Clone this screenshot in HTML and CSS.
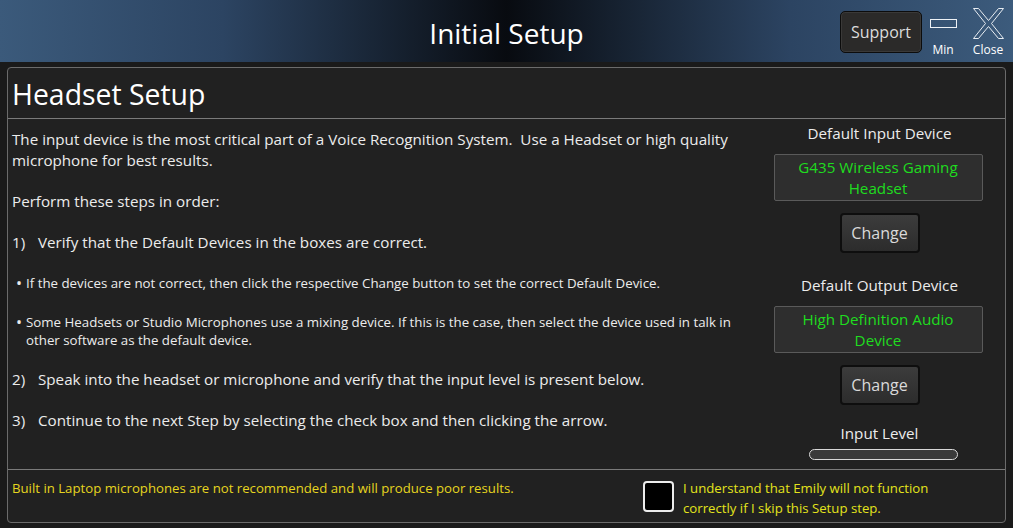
FILE: index.html
```html
<!DOCTYPE html>
<html>
<head>
    <title>Initial Setup</title>
    <link rel="stylesheet" href="styles.css">
</head>
<body>

<div class="titlebar">
    <div></div>
    <h1 class="title">Initial Setup</h1>
    <div class="controls">
        <button class="support">Support</button>
        <div class="winbtn">
            <div class="winicon"><span class="minbox"></span></div>
            <span class="winlabel">Min</span>
        </div>
        <div class="winbtn close">
            <div class="winicon">
                <svg width="31" height="31" viewBox="0 0 31 31">
                    <polygon points="0.5,0.5 5.5,0.5 15.5,12.5 25.5,0.5 30.5,0.5 18.5,15.5 30.5,30.5 25.5,30.5 15.5,18.5 5.5,30.5 0.5,30.5 12.5,15.5"
                             fill="none" stroke="#e8edf2" stroke-width="1"/>
                </svg>
            </div>
            <span class="winlabel">Close</span>
        </div>
    </div>
</div>

<div class="panel">
    <h2 class="heading">Headset Setup</h2>

    <div class="content">
        <div class="steps">
            <p>The input device is the most critical part of a Voice Recognition System.&nbsp; Use a Headset or high quality microphone for best results.</p>
            <p>Perform these steps in order:</p>
            <p class="step"><span class="num">1)</span><span>Verify that the Default Devices in the boxes are correct.</span></p>
            <p class="bullet"><span class="dot">&bull;</span><span>If the devices are not correct, then click the respective Change button to set the correct Default Device.</span></p>
            <p class="bullet"><span class="dot">&bull;</span><span>Some Headsets or Studio Microphones use a mixing device. If this is the case, then select the device used in talk in other software as the default device.</span></p>
            <p class="step"><span class="num">2)</span><span>Speak into the headset or microphone and verify that the input level is present below.</span></p>
            <p class="step"><span class="num">3)</span><span>Continue to the next Step by selecting the check box and then clicking the arrow.</span></p>
        </div>

        <div class="devices">
            <div class="label first">Default Input Device</div>
            <div class="device">G435 Wireless Gaming<br>Headset</div>
            <button class="change">Change</button>

            <div class="label second">Default Output Device</div>
            <div class="device">High Definition Audio<br>Device</div>
            <button class="change">Change</button>

            <div class="label third">Input Level</div>
            <div class="level"></div>
        </div>
    </div>

    <div class="footer">
        <p class="warning">Built in Laptop microphones are not recommended and will produce poor results.</p>
        <div class="ack">
            <span class="checkbox"></span>
            <span class="acktext">I understand that Emily will not function<br>correctly if I skip this Setup step.</span>
        </div>
    </div>
</div>

</body>
</html>
```

FILE: styles.css
```css
html, body {
    margin: 0;
    padding: 0;
}

body {
    width: 1013px;
    height: 528px;
    overflow: hidden;
    background-color: #1a1a1a;
    color: #ececec;
    font-family: "Open Sans", "Noto Sans", sans-serif;
}

p, h1, h2 {
    margin: 0;
}

/* title bar */

.titlebar {
    height: 62px;
    display: grid;
    grid-template-columns: 1fr auto 1fr;
    align-items: center;
    background: linear-gradient(to right, #3b5a7b 0%, #2c4462 22%, #080b10 50%, #2c4462 78%, #3c5b7c 100%);
}

.title {
    font-size: 28px;
    font-weight: 400;
    color: #ffffff;
    padding-top: 3px;
}

.controls {
    justify-self: end;
    display: flex;
    align-items: flex-start;
    padding-right: 8px;
    height: 62px;
    box-sizing: border-box;
    padding-top: 7px;
}

.support {
    width: 82px;
    height: 42px;
    margin-top: 4px;
    margin-right: 1px;
    background-color: #2b2a29;
    border: 1px solid #0c0c0c;
    border-radius: 5px;
    color: #dcdcdc;
    font-family: inherit;
    font-size: 16px;
    box-shadow: inset 0 0 0 1px #3a3938;
}

.winbtn {
    display: flex;
    flex-direction: column;
    align-items: center;
    width: 40px;
}

.winbtn.close {
    width: 34px;
    margin-left: 8px;
}

.winicon {
    height: 32px;
    display: flex;
    align-items: center;
    justify-content: center;
}

.minbox {
    display: block;
    width: 25px;
    height: 7px;
    border: 1px solid #eef2f6;
}

.winlabel {
    margin-top: 4px;
    font-size: 12px;
    line-height: 14px;
    color: #ffffff;
}

/* main panel */

.panel {
    margin: 5px 7px 0 7px;
    height: 454px;
    border: 1px solid #6b6b6b;
    border-radius: 4px;
    background-color: #212121;
    display: flex;
    flex-direction: column;
}

.heading {
    height: 51px;
    box-sizing: border-box;
    padding: 6px 0 0 4px;
    font-size: 28.4px;
    font-weight: 400;
    line-height: 40px;
    color: #ffffff;
    border-bottom: 1px solid #7a7a7a;
}

.content {
    flex: 1;
    display: grid;
    grid-template-columns: 1fr 251px;
}

.steps {
    display: flex;
    flex-direction: column;
    gap: 20px;
    padding: 10px 10px 0 4px;
    font-size: 15.2px;
    line-height: 21px;
}

.step {
    display: flex;
}

.num {
    width: 26px;
    flex: none;
}

.bullet {
    display: flex;
    font-size: 13.3px;
    line-height: 18px;
    padding-left: 4px;
    margin-top: 1px;
}

.dot {
    width: 10px;
    flex: none;
    font-size: 16px;
}

.devices {
    display: flex;
    flex-direction: column;
    align-items: center;
    font-size: 15.2px;
    line-height: 21px;
}

.label.first {
    margin-top: 4px;
}

.label.second {
    margin-top: 22px;
}

.label.third {
    margin-top: 18px;
}

.device {
    margin-top: 10px;
    margin-left: -3px;
    width: 207px;
    height: 45px;
    border: 1px solid #5a5a5a;
    border-radius: 2px;
    background-color: #2e2e2e;
    color: #1fdc1f;
    text-align: center;
    display: flex;
    align-items: center;
    justify-content: center;
}

.change {
    margin-top: 12px;
    width: 80px;
    height: 40px;
    border: 2px solid #0e0e0e;
    border-radius: 4px;
    background: linear-gradient(#3c3c3c, #2c2c2c);
    color: #dadada;
    font-family: inherit;
    font-size: 16px;
}

.level {
    margin-top: 5px;
    margin-left: 8px;
    width: 147px;
    height: 9px;
    border: 1px solid #d8d8d8;
    border-radius: 6px;
    background-color: #3a3a3a;
}

/* footer */

.footer {
    height: 52px;
    border-top: 1px solid #7a7a7a;
    display: flex;
    justify-content: space-between;
    color: #e6d51f;
}

.warning {
    padding: 9px 0 0 4px;
    font-size: 13.2px;
    line-height: 18px;
}

.ack {
    width: 362px;
    display: flex;
    align-items: flex-start;
    padding-top: 8px;
}

.checkbox {
    flex: none;
    width: 27px;
    height: 27px;
    border: 2px solid #ececec;
    border-radius: 4px;
    background-color: #000000;
    margin-top: 3px;
}

.acktext {
    margin-left: 9px;
    font-size: 13.2px;
    line-height: 20px;
    color: #e4e41c;
}
```
